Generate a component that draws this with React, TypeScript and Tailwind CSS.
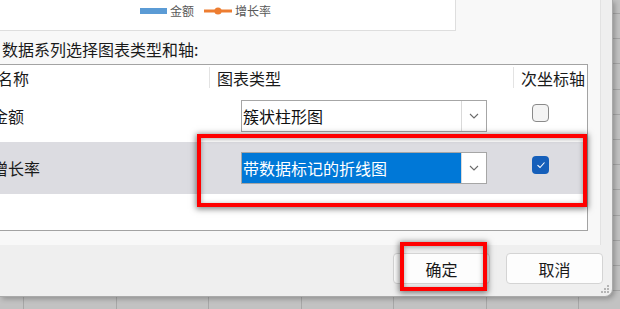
import React from "react";

const font = { fontFamily: '"Noto Sans CJK SC", "Noto Sans", sans-serif' };

function Chevron() {
  return (
    <svg width="10" height="6" viewBox="0 0 10 6">
      <polyline points="1,1 5,5 9,1" fill="none" stroke="#6b6b6b" strokeWidth="1.1" />
    </svg>
  );
}

function Select({ text, selected }: { text: string; selected?: boolean }) {
  return (
    <div className="flex h-[32px] w-[246px] border border-[#a6a6a6] bg-white">
      <div
        className={
          selected
            ? "flex flex-1 items-center bg-[#0078d7] pl-[1px] text-[16px] leading-[20px] text-white"
            : "flex flex-1 items-center pl-[1px] text-[16px] leading-[20px] text-[#111111]"
        }
      >
        {text}
      </div>
      <div className="flex w-[25px] items-center justify-center border-l border-[#d9d9d9] bg-white">
        <Chevron />
      </div>
    </div>
  );
}

function Checkbox({ checked }: { checked?: boolean }) {
  if (checked) {
    return (
      <div className="mb-[7px] flex h-[18px] w-[17px] items-center justify-center rounded-[4px] bg-[#155fba]">
        <svg width="10" height="8" viewBox="0 0 10 8">
          <polyline points="1.5,4.2 4,6.5 8.5,1.5" fill="none" stroke="white" strokeWidth="1.1" />
        </svg>
      </div>
    );
  }
  return <div className="mb-[7px] h-[18px] w-[17px] rounded-[4px] border border-[#8a8a8a] bg-[#f4f4f4]" />;
}

function HeaderCell({ text, width, sep }: { text: string; width: string; sep?: boolean }) {
  return (
    <div className={`flex h-full items-center ${width}`}>
      {sep && <div className="h-[21px] w-px bg-[#e3e3e3]" />}
      <span className={sep ? "pl-[7px]" : "-ml-[35px]"}>{text}</span>
    </div>
  );
}

export default function App() {
  const cols = [0, 1, 2, 3, 4, 5, 6, 7];
  const rows = Array.from({ length: 13 }, (_, i) => i);
  return (
    <div className="relative h-[309px] w-[620px] overflow-hidden bg-[#c2c2c2]" style={font}>
      {/* spreadsheet grid behind */}
      <div className="absolute inset-0 flex pl-[23px]">
        {cols.map((c) => (
          <div key={c} className="h-full w-[92.5px] shrink-0 border-l border-[#a7a7a7]" />
        ))}
      </div>
      <div className="absolute inset-0 flex flex-col pt-[13px]">
        {rows.map((r) => (
          <div key={r} className="h-[25.2px] w-full shrink-0 border-t border-[#a7a7a7]" />
        ))}
      </div>

      {/* dialog window */}
      <div className="absolute left-0 top-0 flex h-[297px] w-[613px] flex-col overflow-hidden rounded-br-[8px] border-b border-r border-[#a9a9a9] bg-[#efefef] shadow-[2px_2px_5px_rgba(0,0,0,0.25)]">
        <div className="flex h-[245px] w-[601px] flex-col border-r border-[#e2e2e2] bg-[#f8f8f8]">
          {/* chart preview */}
          <div className="flex h-[31px] w-[456px] items-start border-b border-r border-[#dedede] bg-white pl-[140px] pt-[3px] text-[12px] leading-[16px] text-[#595959]">
            <div className="flex items-center">
              <div className="h-[6px] w-[27px] bg-[#5b9bd5]" />
              <span className="ml-[3px]">金额</span>
              <svg width="28" height="10" viewBox="0 0 28 10" className="ml-[10px]">
                <line x1="0" y1="5" x2="28" y2="5" stroke="#ed7d31" strokeWidth="3" />
                <circle cx="14" cy="5" r="3.6" fill="#ed7d31" />
              </svg>
              <span className="ml-[3px]">增长率</span>
            </div>
          </div>

          <div className="mt-[8px] h-[20px] pl-[2px] text-[16px] leading-[20px] text-[#1a1a1a]">
            数据系列选择图表类型和轴:
          </div>

          {/* table */}
          <div className="mt-[5px] flex h-[167px] w-[588px] flex-col border-b border-r border-t border-[#a3a3a3] bg-white text-[16px] leading-[20px] text-[#1a1a1a]">
            <div className="flex h-[25px] shrink-0">
              <HeaderCell text="系列名称" width="w-[209px] pl-[0px]" />
              <HeaderCell text="图表类型" width="w-[304px]" sep />
              <HeaderCell text="次坐标轴" width="flex-1" sep />
            </div>
            <div className="flex h-[52px] shrink-0 items-center">
              <div className="w-[209px] -ml-[8px] pl-0">
                <span>金额</span>
              </div>
              <div className="w-[304px] pl-[40px]">
                <Select text="簇状柱形图" />
              </div>
              <div className="flex flex-1 justify-start pl-[27px]">
                <Checkbox />
              </div>
            </div>
            <div className="flex h-[52px] shrink-0 items-center bg-[#dcdce1]">
              <div className="w-[209px] -ml-[8px]">
                <span>增长率</span>
              </div>
              <div className="w-[304px] pl-[40px]">
                <Select text="带数据标记的折线图" selected />
              </div>
              <div className="flex flex-1 justify-start pl-[27px]">
                <Checkbox checked />
              </div>
            </div>
          </div>
        </div>

        {/* footer */}
        <div className="flex flex-1 items-start justify-end gap-[16px] pr-[9px] pt-[8px] text-[16px] leading-[20px] text-[#1a1a1a]">
          <button className="flex h-[31px] w-[97px] items-center justify-center rounded-[4px] border border-[#d4d4d4] bg-[#fdfdfd]">
            确定
          </button>
          <button className="flex h-[31px] w-[97px] items-center justify-center rounded-[4px] border border-[#d4d4d4] bg-[#fdfdfd]">
            取消
          </button>
        </div>

        {/* resize grip */}
        <svg width="10" height="10" viewBox="0 0 10 10" className="absolute bottom-[2px] right-[2px]">
          <rect x="7" y="1" width="2" height="2" fill="#b5b5b5" />
          <rect x="4" y="4" width="2" height="2" fill="#b5b5b5" />
          <rect x="7" y="4" width="2" height="2" fill="#b5b5b5" />
          <rect x="1" y="7" width="2" height="2" fill="#b5b5b5" />
          <rect x="4" y="7" width="2" height="2" fill="#b5b5b5" />
          <rect x="7" y="7" width="2" height="2" fill="#b5b5b5" />
        </svg>
      </div>

      {/* red annotation boxes */}
      <div className="absolute left-[197px] top-[134px] h-[73px] w-[390px] border-[4px] border-[#ff0000] shadow-[0_1px_6px_1px_rgba(0,0,0,0.5),inset_0_1px_5px_rgba(0,0,0,0.35)]" />
      <div className="absolute left-[400px] top-[242px] h-[49px] w-[87px] border-[4px] border-[#ff0000] shadow-[0_1px_6px_1px_rgba(0,0,0,0.5),inset_0_1px_5px_rgba(0,0,0,0.35)]" />
    </div>
  );
}
